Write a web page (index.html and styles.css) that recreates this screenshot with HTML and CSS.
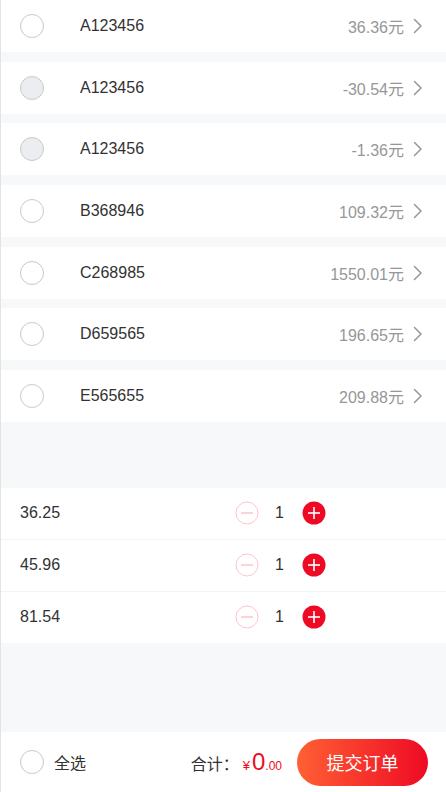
FILE: index.html
```html
<!DOCTYPE html>
<html lang="zh-CN">
<head>
<meta charset="utf-8">
<title>订单</title>
<link rel="stylesheet" href="styles.css">
</head>
<body>
<div class="page">
  <div class="list">
    <div class="row"><span class="check"></span><span class="code">A123456</span><span class="amount">36.36元</span><svg class="arrow" viewBox="0 0 10 16" width="10" height="16"><polyline points="1.5,1.5 8,8 1.5,14.5"/></svg></div>
    <div class="row"><span class="check disabled"></span><span class="code">A123456</span><span class="amount">-30.54元</span><svg class="arrow" viewBox="0 0 10 16" width="10" height="16"><polyline points="1.5,1.5 8,8 1.5,14.5"/></svg></div>
    <div class="row"><span class="check disabled"></span><span class="code">A123456</span><span class="amount">-1.36元</span><svg class="arrow" viewBox="0 0 10 16" width="10" height="16"><polyline points="1.5,1.5 8,8 1.5,14.5"/></svg></div>
    <div class="row"><span class="check"></span><span class="code">B368946</span><span class="amount">109.32元</span><svg class="arrow" viewBox="0 0 10 16" width="10" height="16"><polyline points="1.5,1.5 8,8 1.5,14.5"/></svg></div>
    <div class="row"><span class="check"></span><span class="code">C268985</span><span class="amount">1550.01元</span><svg class="arrow" viewBox="0 0 10 16" width="10" height="16"><polyline points="1.5,1.5 8,8 1.5,14.5"/></svg></div>
    <div class="row"><span class="check"></span><span class="code">D659565</span><span class="amount">196.65元</span><svg class="arrow" viewBox="0 0 10 16" width="10" height="16"><polyline points="1.5,1.5 8,8 1.5,14.5"/></svg></div>
    <div class="row"><span class="check"></span><span class="code">E565655</span><span class="amount">209.88元</span><svg class="arrow" viewBox="0 0 10 16" width="10" height="16"><polyline points="1.5,1.5 8,8 1.5,14.5"/></svg></div>
  </div>

  <div class="steps">
    <div class="step-row">
      <span class="price">36.25</span>
      <span class="stepper">
        <svg class="btn" viewBox="0 0 24 24" width="24" height="24"><circle class="minus-c" cx="12" cy="12" r="11"/><line class="minus-l" x1="6" y1="12" x2="18" y2="12"/></svg>
        <span class="qty">1</span>
        <svg class="btn" viewBox="0 0 24 24" width="24" height="24"><circle class="plus-c" cx="12" cy="12" r="11.5"/><line class="plus-l" x1="6" y1="12" x2="18" y2="12"/><line class="plus-l" x1="12" y1="6" x2="12" y2="18"/></svg>
      </span>
    </div>
    <div class="step-row">
      <span class="price">45.96</span>
      <span class="stepper">
        <svg class="btn" viewBox="0 0 24 24" width="24" height="24"><circle class="minus-c" cx="12" cy="12" r="11"/><line class="minus-l" x1="6" y1="12" x2="18" y2="12"/></svg>
        <span class="qty">1</span>
        <svg class="btn" viewBox="0 0 24 24" width="24" height="24"><circle class="plus-c" cx="12" cy="12" r="11.5"/><line class="plus-l" x1="6" y1="12" x2="18" y2="12"/><line class="plus-l" x1="12" y1="6" x2="12" y2="18"/></svg>
      </span>
    </div>
    <div class="step-row">
      <span class="price">81.54</span>
      <span class="stepper">
        <svg class="btn" viewBox="0 0 24 24" width="24" height="24"><circle class="minus-c" cx="12" cy="12" r="11"/><line class="minus-l" x1="6" y1="12" x2="18" y2="12"/></svg>
        <span class="qty">1</span>
        <svg class="btn" viewBox="0 0 24 24" width="24" height="24"><circle class="plus-c" cx="12" cy="12" r="11.5"/><line class="plus-l" x1="6" y1="12" x2="18" y2="12"/><line class="plus-l" x1="12" y1="6" x2="12" y2="18"/></svg>
      </span>
    </div>
  </div>

  <div class="bar">
    <span class="check"></span>
    <span class="all">全选</span>
    <span class="total">合计：<span class="cur">¥</span><span class="int">0</span><span class="dec">.00</span></span>
    <button class="submit">提交订单</button>
  </div>
</div>
</body>
</html>
```

FILE: styles.css
```css
* { box-sizing: border-box; }
html, body { margin: 0; padding: 0; }
body {
  background: #f7f8fa;
  font-family: "Liberation Sans", Arial, "Noto Sans CJK SC", sans-serif;
  color: #323233;
}
.page {
  height: 792px;
  display: flex;
  flex-direction: column;
  border-left: 1px solid #e3e3e3;
}
.list {
  display: flex;
  flex-direction: column;
  gap: 9.67px;
  margin-bottom: 66px;
}
.row {
  height: 52px;
  background: #fff;
  display: flex;
  align-items: center;
  padding: 0 23px 0 19px;
  font-size: 16px;
}
.check {
  width: 24px;
  height: 24px;
  border-radius: 50%;
  border: 1px solid #c8c9cc;
  background: #fff;
  flex: none;
}
.check.disabled { background: #ebedf0; }
.code { margin-left: 36px; color: #323233; }
.amount { margin-left: auto; color: #969799; }
.arrow {
  margin-left: 9px;
  fill: none;
  stroke: #969799;
  stroke-width: 1.5;
  stroke-linecap: round;
  stroke-linejoin: round;
}
.steps { display: flex; flex-direction: column; }
.step-row {
  height: 52px;
  background: #fff;
  display: flex;
  align-items: center;
  padding-left: 19px;
  font-size: 16px;
  border-bottom: 1px solid #f2f3f5;
}
.step-row:last-child { border-bottom: none; height: 51px; }
.price { width: 215px; }
.stepper { display: flex; align-items: center; }
.btn { display: block; }
.minus-c { fill: #fff; stroke: #fcc5cc; stroke-width: 1; }
.minus-l { stroke: #fcc5cc; stroke-width: 1.5; }
.plus-c { fill: #ee0a24; }
.plus-l { stroke: #fff; stroke-width: 1.6; }
.qty { width: 43px; text-align: center; padding-right: 2px; }
.bar {
  margin-top: auto;
  height: 60px;
  background: #fff;
  display: flex;
  align-items: center;
  padding: 0 18px 0 19px;
}
.all { margin-left: 10px; font-size: 16px; }
.total { margin-left: auto; font-size: 16px; color: #323233; display: flex; align-items: baseline; }
.cur { color: #ee0a24; font-size: 13px; margin-left: 4px; }
.int { color: #ee0a24; font-size: 24px; margin-left: 2px; }
.dec { color: #ee0a24; font-size: 12px; }
.submit {
  margin-left: 15px;
  width: 131px;
  height: 47px;
  border: none;
  border-radius: 24px;
  background: linear-gradient(to right, #ff6034, #ee0a24);
  color: #fff;
  font-size: 18px;
  font-family: "Liberation Sans", "Noto Sans CJK SC", sans-serif;
  padding: 0;
}
```
